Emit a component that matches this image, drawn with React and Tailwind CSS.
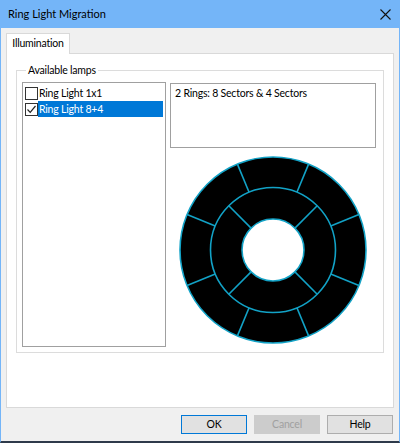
import React from 'react';

const font = { fontFamily: 'Lato, "Noto Sans", sans-serif' };

const CheckBox = ({ checked }) => (
  <span className="w-[13px] h-[13px] border border-[#333333] bg-white flex items-center justify-center shrink-0">
    {checked && (
      <svg width="11" height="11" viewBox="0 0 11 11">
        <path d="M1.5 5.5 L4.2 8.3 L9.5 2" fill="none" stroke="#222" strokeWidth="1.2" />
      </svg>
    )}
  </span>
);

const RingLight = () => {
  const c = 94;
  const rOut = 93;
  const rMid = 62.5;
  const rIn = 31;
  const line = (deg, r1, r2) => {
    const a = (deg * Math.PI) / 180;
    return {
      x1: c + r1 * Math.cos(a),
      y1: c + r1 * Math.sin(a),
      x2: c + r2 * Math.cos(a),
      y2: c + r2 * Math.sin(a),
    };
  };
  const outer = [0, 1, 2, 3, 4, 5, 6, 7].map((i) => line(22.5 + i * 45, rMid, rOut));
  const inner = [0, 1, 2, 3].map((i) => line(45 + i * 90, rIn, rMid));

  return (
    <svg width="188" height="188" viewBox="0 0 188 188">
      <circle cx={c} cy={c} r={rOut} fill="#000" stroke="#12a2c6" strokeWidth="1.6" />
      <circle cx={c} cy={c} r={rMid} fill="none" stroke="#12a2c6" strokeWidth="1.6" />
      <circle cx={c} cy={c} r={rIn} fill="#fff" stroke="#12a2c6" strokeWidth="1.6" />
      {outer.map((l, i) => (
        <line key={'o' + i} {...l} stroke="#12a2c6" strokeWidth="1.6" />
      ))}
      {inner.map((l, i) => (
        <line key={'i' + i} {...l} stroke="#12a2c6" strokeWidth="1.6" />
      ))}
    </svg>
  );
};

export default function App() {
  return (
    <div
      className="w-[400px] h-[443px] bg-[#f0f0f0] border-x border-[#74b5f8] border-b-2 border-b-[#2e3a4a] flex flex-col text-[10.5px] tracking-[-0.2px] text-black"
      style={font}
    >
      {/* Title bar */}
      <div className="h-[28px] bg-[#74b5f8] flex items-center justify-between pl-[7px] pr-[8px] shrink-0">
        <span className="text-[11px] tracking-normal">Ring Light Migration</span>
        <svg width="11" height="11" viewBox="0 0 11 11">
          <path d="M0.5 0.5 L10.5 10.5 M10.5 0.5 L0.5 10.5" stroke="#111" strokeWidth="1.1" />
        </svg>
      </div>

      {/* Tabs */}
      <div className="px-[5px] pt-[5px] flex flex-col">
        <div className="flex">
          <div className="h-[21px] w-[64px] bg-white border border-b-0 border-[#d9d9d9] flex items-center justify-center -mb-px relative z-10">
            Illumination
          </div>
        </div>
        <div className="h-[355px] bg-white border border-[#d9d9d9] px-[9px] pt-[8px]">
          <fieldset className="border border-[#dcdcdc] h-[291px] px-[5px] pt-[4px] flex gap-[4px]">
            <legend className="ml-[4px] px-[2px] leading-[16px]">Available lamps</legend>
            <div className="w-[144px] h-[265px] border border-[#a0a0a0] bg-white pt-[2px] pl-[2px] pr-[2px] shrink-0">
              <div className="h-[16px] flex items-center">
                <CheckBox />
                <span className="pl-[1px] leading-[16px]">Ring Light 1x1</span>
              </div>
              <div className="h-[16px] flex items-center">
                <CheckBox checked />
                <span className="flex-1 bg-[#0078d7] text-white leading-[16px] pl-[1px]">Ring Light 8+4</span>
              </div>
            </div>
            <div className="w-[206px] flex flex-col items-center gap-[8px] pt-[1px]">
              <div className="w-full h-[65px] border border-[#a0a0a0] bg-white px-[4px] pt-[1px] leading-[16px]">
                2 Rings: 8 Sectors &amp; 4 Sectors
              </div>
              <RingLight />
            </div>
          </fieldset>
        </div>
      </div>

      {/* Buttons */}
      <div className="flex justify-end gap-[7px] pr-[6px] pt-[7px]">
        <button className="w-[66px] h-[19px] bg-[#e1e1e1] border border-[#0078d7] text-black">OK</button>
        <button className="w-[66px] h-[19px] bg-[#cccccc] border border-[#cccccc] text-[#a0a0a0]">Cancel</button>
        <button className="w-[66px] h-[19px] bg-[#e1e1e1] border border-[#adadad] text-black">Help</button>
      </div>
    </div>
  );
}
